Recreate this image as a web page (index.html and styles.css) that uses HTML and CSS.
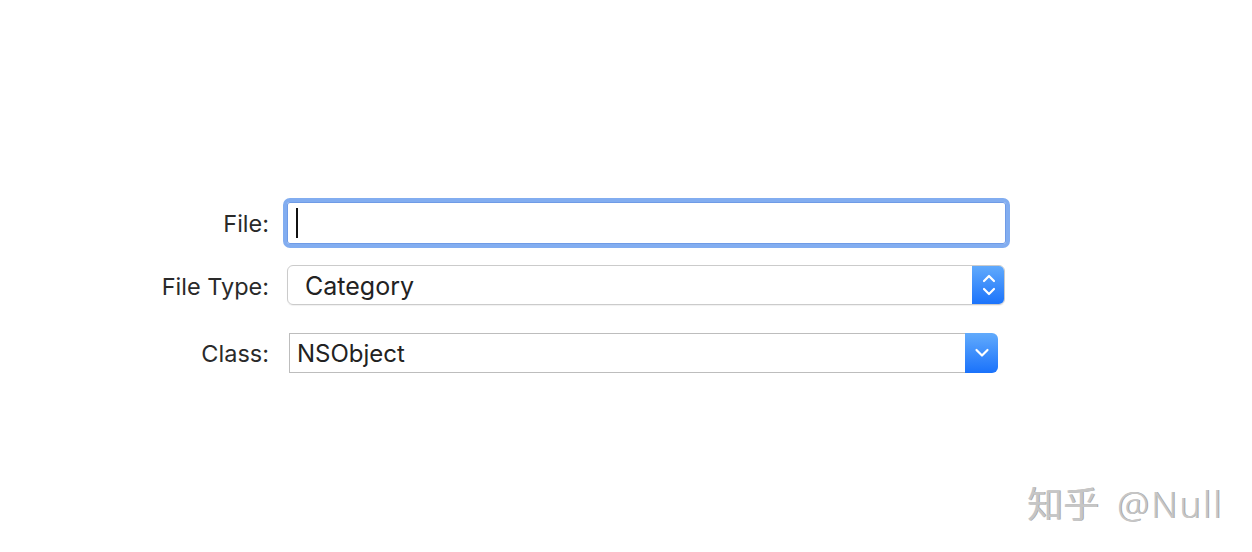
FILE: index.html
```html
<!DOCTYPE html>
<html lang="en">
<head>
    <meta charset="UTF-8">
    <title>New File Options</title>
    <link rel="stylesheet" href="styles.css">
</head>
<body>
    <div class="form">
        <div class="row row-file">
            <label class="label" for="fileName">File:</label>
            <div class="text-field focused">
                <span class="caret"></span>
                <input type="text" id="fileName">
            </div>
        </div>

        <div class="row row-type">
            <span class="label">File Type:</span>
            <div class="popup">
                <span class="popup-value">Category</span>
                <span class="popup-arrows">
                    <svg width="16" height="28" viewBox="0 0 16 28">
                        <path d="M3 10 L8 5 L13 10" fill="none" stroke="#fff" stroke-width="2.2" stroke-linecap="round" stroke-linejoin="round"/>
                        <path d="M3 18 L8 23 L13 18" fill="none" stroke="#fff" stroke-width="2.2" stroke-linecap="round" stroke-linejoin="round"/>
                    </svg>
                </span>
            </div>
        </div>

        <div class="row row-class">
            <span class="label">Class:</span>
            <div class="combo">
                <span class="combo-value">NSObject</span>
                <span class="combo-button">
                    <svg width="16" height="12" viewBox="0 0 16 12">
                        <path d="M2.5 3 L8 8.5 L13.5 3" fill="none" stroke="#fff" stroke-width="2.2" stroke-linecap="round" stroke-linejoin="round"/>
                    </svg>
                </span>
            </div>
        </div>
    </div>

    <div class="watermark"><span class="wm-cn">知乎</span><span class="wm-name">@Null</span></div>
</body>
</html>
```

FILE: styles.css
```css
body {
    margin: 0;
    background-color: #fff;
    font-family: 'Inter', 'Liberation Sans', sans-serif;
    color: #262626;
}

.form {
    padding-top: 198px;
}

.row {
    display: flex;
    align-items: center;
}

.label {
    width: 269px;
    text-align: right;
    font-size: 23.5px;
    color: #2a2a2a;
}

/* File name field with focus ring */
.row-file {
    height: 50px;
}

.text-field {
    margin-left: 14px;
    width: 719px;
    height: 42px;
    border: 4px solid #82adf0;
    border-radius: 7px;
    background: #fff;
    display: flex;
    align-items: center;
    box-shadow: inset 0 0 0 1px #6f9be6;
}

.text-field input {
    border: none;
    outline: none;
    width: 100%;
    height: 100%;
    padding: 0;
    background: transparent;
}

.caret {
    display: block;
    width: 2px;
    height: 30px;
    margin-left: 9px;
    flex: none;
    background: #111;
}

/* Pop-up button */
.row-type {
    height: 40px;
    margin-top: 17px;
}

.row-type .label {
    padding-top: 2px;
}

.popup {
    margin-left: 18px;
    width: 718px;
    height: 40px;
    box-sizing: border-box;
    border: 1px solid #cbcbcb;
    border-radius: 6px;
    display: flex;
    align-items: center;
    box-shadow: 0 1px 1px rgba(0, 0, 0, 0.06);
    overflow: hidden;
}

.popup-value {
    flex: 1;
    padding-left: 17px;
    padding-top: 2px;
    font-size: 25px;
    color: #222;
}

.popup-arrows {
    width: 33px;
    height: 40px;
    margin-right: -1px;
    display: flex;
    align-items: center;
    justify-content: center;
    background: linear-gradient(#62abfc, #1a72fb);
}

/* Combo box */
.row-class {
    height: 40px;
    margin-top: 28px;
}

.combo {
    margin-left: 20px;
    width: 709px;
    height: 40px;
    display: flex;
}

.combo-value {
    flex: 1;
    box-sizing: border-box;
    border: 1px solid #bdbdbd;
    border-right: none;
    padding-left: 7px;
    display: flex;
    align-items: center;
    font-size: 24px;
    color: #222;
}

.combo-button {
    width: 33px;
    display: flex;
    align-items: center;
    justify-content: center;
    border-radius: 0 6px 6px 0;
    background: linear-gradient(#62abfc, #1a72fb);
}

.watermark {
    position: absolute;
    left: 1027px;
    top: 476px;
    font-size: 36px;
    color: #c6c6c6;
    text-shadow: 1px 0 0 #a9a9a9;
    white-space: nowrap;
}

.wm-cn {
    font-family: 'Noto Sans CJK SC', sans-serif;
}

.wm-name {
    margin-left: 18px;
    letter-spacing: 2px;
    font-family: 'Noto Sans', 'Noto Sans CJK SC', sans-serif;
    font-weight: 300;
}
```
